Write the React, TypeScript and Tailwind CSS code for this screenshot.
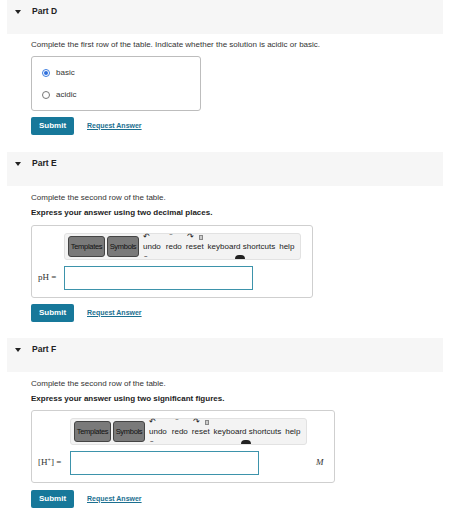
import type { ReactNode } from 'react'

const SANS = { fontFamily: '"Liberation Sans", Arial, sans-serif' }
const SERIF = { fontFamily: '"Liberation Serif", "Times New Roman", serif' }

function PartHeader({ title }: { title: string }) {
  return (
    <div className="flex h-[34px] items-start bg-[#f6f6f6] pt-[5px] pl-[8px]">
      <span className="mt-[5px] h-0 w-0 border-x-[3px] border-t-[4px] border-x-transparent border-t-[#222]" />
      <span className="ml-[11px] text-[8.5px] font-bold leading-[12px] text-[#222]">{title}</span>
    </div>
  )
}

function Actions() {
  return (
    <div className="flex items-center gap-[13px]">
      <button
        type="button"
        className="h-[18px] w-[43px] rounded-[2px] bg-[#17789a] text-[8px] font-bold text-white"
      >
        Submit
      </button>
      <span className="text-[7px] font-bold text-[#1b6f90] underline">Request Answer</span>
    </div>
  )
}

function Toolbar() {
  return (
    <div className="flex h-[27px] w-[237px] shrink-0 items-center whitespace-nowrap rounded-[3px] border border-[#e2e2e2] bg-[#f3f3f3] pl-[3px] text-[8px] text-[#222]">
      <span className="flex h-[21px] w-[37px] shrink-0 items-center justify-center rounded-[3px] border border-[#444] bg-[#7a7a7a] text-[7.5px] tracking-[-0.3px] text-[#111]">
        Templates
      </span>
      <span className="ml-[2px] flex h-[21px] w-[32px] shrink-0 items-center justify-center rounded-[3px] border border-[#444] bg-[#7a7a7a] text-[7.5px] tracking-[-0.3px] text-[#111]">
        Symbols
      </span>
      <span className="relative ml-[4px]">
        <span className="absolute -top-[8px] left-0 text-[8px] leading-none">↶</span>
        <span className="absolute -bottom-[6px] left-[1px] text-[6px] leading-none">~</span>
        undo
      </span>
      <span className="relative ml-[5px]">
        <span className="absolute -top-[7px] left-[4px] text-[7px] leading-none">‾</span>
        redo
      </span>
      <span className="relative ml-[4px]">
        <span className="absolute -top-[8px] left-[1px] text-[8px] leading-none">↷</span>
        <span className="absolute -top-[6px] left-[13px] h-[5px] w-[4px] border border-[#888] bg-[#ccc]" />
        reset
      </span>
      <span className="relative ml-[4px]">
        keyboard shortcuts
        <span className="absolute -bottom-[6px] left-[27px] h-[4px] w-[10px] rounded-t-full bg-[#222]" />
      </span>
      <span className="ml-[4px]">help</span>
    </div>
  )
}

function MathAnswer({ label, labelWidth, boxWidth, unit }: { label: ReactNode; labelWidth: string; boxWidth: string; unit?: string }) {
  return (
    <div className={`rounded-[3px] border border-[#cfcfcf] pt-[7px] pb-[7px] ${boxWidth}`}>
      <div className="flex">
        <div className={`${labelWidth} shrink-0`} />
        <Toolbar />
      </div>
      <div className="mt-[6px] flex items-center">
        <div className={`${labelWidth} shrink-0 pl-[6px] text-[9px] text-[#333]`} style={SERIF}>
          {label}
        </div>
        <div className="h-[24px] w-[189px] border border-[#3d93ab]" />
        {unit && (
          <span className="ml-[57px] text-[9px] italic text-[#333]" style={SERIF}>
            {unit}
          </span>
        )}
      </div>
    </div>
  )
}

export default function App() {
  return (
    <div className="min-h-[511px] w-[474px] bg-white text-[#333]" style={SANS}>
      <div className="w-[443px] pl-[7px]">
        {/* Part D */}
        <PartHeader title="Part D" />
        <div className="pl-[24px] pt-[5px]">
          <p className="text-[8px] leading-[11px]">
            Complete the first row of the table. Indicate whether the solution is acidic or basic.
          </p>
          <div className="mt-[6px] flex h-[55px] w-[170px] flex-col justify-center gap-[10px] rounded-[3px] border border-[#bdbdbd] pl-[10px] text-[8px]">
            <label className="flex items-center gap-[6px]">
              <span className="flex h-[8px] w-[8px] items-center justify-center rounded-full border border-[#3b7de0] bg-white">
                <span className="h-[4px] w-[4px] rounded-full bg-[#2f6fdc]" />
              </span>
              basic
            </label>
            <label className="flex items-center gap-[6px]">
              <span className="h-[8px] w-[8px] rounded-full border border-[#777] bg-white" />
              acidic
            </label>
          </div>
          <div className="mt-[6px]">
            <Actions />
          </div>
        </div>

        {/* Part E */}
        <div className="mt-[17px]">
          <PartHeader title="Part E" />
        </div>
        <div className="pl-[24px] pt-[6px]">
          <p className="text-[8px] leading-[11px]">Complete the second row of the table.</p>
          <p className="mt-[4px] text-[8px] font-bold leading-[11px] text-[#222]">
            Express your answer using two decimal places.
          </p>
          <div className="mt-[7px]">
            <MathAnswer label="pH =" labelWidth="w-[32px]" boxWidth="w-[282px]" />
          </div>
          <div className="mt-[6px]">
            <Actions />
          </div>
        </div>

        {/* Part F */}
        <div className="mt-[16px]">
          <PartHeader title="Part F" />
        </div>
        <div className="pl-[24px] pt-[6px]">
          <p className="text-[8px] leading-[11px]">Complete the second row of the table.</p>
          <p className="mt-[4px] text-[8px] font-bold leading-[11px] text-[#222]">
            Express your answer using two significant figures.
          </p>
          <div className="mt-[6px]">
            <MathAnswer
              label={
                <span>
                  [H<sup className="text-[6px]">+</sup>] =
                </span>
              }
              labelWidth="w-[38px]"
              boxWidth="w-[304px]"
              unit="M"
            />
          </div>
          <div className="mt-[7px]">
            <Actions />
          </div>
        </div>
      </div>
    </div>
  )
}
